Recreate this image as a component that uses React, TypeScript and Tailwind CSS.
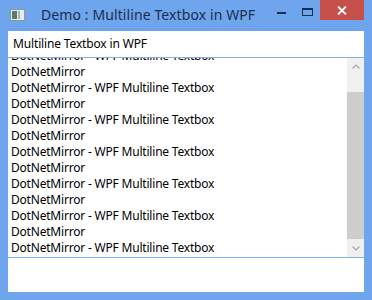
import React from "react";

const LONG = "DotNetMirror - WPF Multiline Textbox";
const SHORT = "DotNetMirror";

export default function App() {
  const lines = Array.from({ length: 13 }, (_, i) => (i % 2 === 0 ? LONG : SHORT));
  return (
    <div
      className="w-[372px] h-[300px] bg-[#6fa5ec] flex flex-col overflow-hidden"
      style={{ fontFamily: '"Noto Sans", "Open Sans", sans-serif' }}
    >
      {/* title bar */}
      <div className="h-[31px] flex items-start">
        <div className="mt-[9px] ml-[10px] w-[15px] h-[12px]">
          <svg width="15" height="12" viewBox="0 0 15 12">
            <rect x="0.5" y="0.5" width="14" height="11" fill="#e8ece8" stroke="#8a9a96" />
            <rect x="2" y="2" width="5" height="8" fill="#5d7a6e" />
            <rect x="8" y="2" width="2" height="8" fill="#9fbfae" />
          </svg>
        </div>
        <div className="ml-[16px] mt-[5px] text-[14px] leading-[20px] tracking-[0.1px] text-[#1b2f4d] whitespace-nowrap">
          Demo : Multiline Textbox in WPF
        </div>
        <div className="flex-1" />
        <div className="w-[26px] h-[20px] shrink-0">
          <svg width="26" height="20" viewBox="0 0 26 20">
            <rect x="9" y="12" width="9" height="2" fill="#1b2f4d" />
          </svg>
        </div>
        <div className="w-[26px] h-[20px] shrink-0">
          <svg width="26" height="20" viewBox="0 0 26 20">
            <rect x="8.5" y="8.5" width="10" height="7" fill="none" stroke="#1b2f4d" strokeWidth="1" />
            <rect x="8" y="8" width="11" height="2" fill="#1b2f4d" />
          </svg>
        </div>
        <div className="w-[44px] h-[20px] shrink-0 bg-[#c7504b] mr-[8px] flex items-center justify-center">
          <svg width="10" height="9" viewBox="0 0 10 9">
            <path d="M1 0.5 L9 8.5 M9 0.5 L1 8.5" stroke="#ffffff" strokeWidth="1.8" />
          </svg>
        </div>
      </div>

      {/* client area */}
      <div className="flex-1 mx-[8px] mb-[8px] bg-white flex flex-col">
        <div className="h-[27px] border-b border-[#7eb2e8] flex items-center pl-[5px] text-[12px] tracking-[-0.15px] text-black">
          Multiline Textbox in WPF
        </div>
        <div className="h-[200px] border-b border-[#7eb2e8] flex">
          <div className="flex-1 overflow-hidden pl-[3px]">
            <div className="-mt-[10px]">
              {lines.map((t, i) => (
                <div key={i} className="h-[16px] leading-[16px] text-[12px] tracking-[-0.2px] text-black whitespace-nowrap">
                  {t}
                </div>
              ))}
            </div>
          </div>
          <div className="w-[17px] bg-[#f0f0f0] flex flex-col">
            <div className="h-[17px] flex items-center justify-center">
              <svg width="8" height="5" viewBox="0 0 8 5">
                <path d="M0.5 4.5 L4 1 L7.5 4.5" fill="none" stroke="#a6a6a6" strokeWidth="1.2" />
              </svg>
            </div>
            <div className="h-[17px]" />
            <div className="flex-1 bg-[#cdcdcd]" />
            <div className="h-[18px] flex items-center justify-center">
              <svg width="8" height="5" viewBox="0 0 8 5">
                <path d="M0.5 0.5 L4 4 L7.5 0.5" fill="none" stroke="#a6a6a6" strokeWidth="1.2" />
              </svg>
            </div>
          </div>
        </div>
        <div className="flex-1" />
      </div>
    </div>
  );
}
